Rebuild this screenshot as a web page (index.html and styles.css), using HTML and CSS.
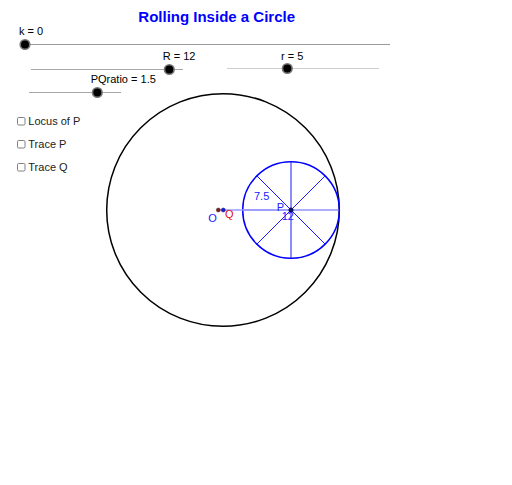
FILE: index.html
```html
<!DOCTYPE html>
<html>
<head>
<meta charset="utf-8">
<link rel="stylesheet" href="styles.css">
</head>
<body>
<div class="applet">
<svg class="board" width="512" height="485" viewBox="0 0 512 485" xmlns="http://www.w3.org/2000/svg">
  <text class="title" x="138.3" y="22.4">Rolling Inside a Circle</text>

  <!-- sliders -->
  <text class="lbl" x="19" y="35">k = 0</text>
  <line class="track dark" x1="25" y1="44.5" x2="390" y2="44.5"/>
  <circle class="knob" cx="25" cy="44.5" r="4.8"/>

  <text class="lbl" x="162.7" y="60">R = 12</text>
  <line class="track mid" x1="31" y1="69.5" x2="183" y2="69.5"/>
  <circle class="knob" cx="169.3" cy="69.5" r="4.8"/>

  <text class="lbl" x="281" y="60">r = 5</text>
  <line class="track light" x1="227" y1="68.5" x2="379" y2="68.5"/>
  <circle class="knob" cx="287.3" cy="68.5" r="4.8"/>

  <text class="lbl" x="90.7" y="83.3">PQratio = 1.5</text>
  <line class="track mid" x1="29" y1="92.5" x2="121" y2="92.5"/>
  <circle class="knob" cx="97.3" cy="92.5" r="4.8"/>

  <!-- checkboxes -->
  <rect class="cb" x="17.5" y="117.5" width="7.5" height="7.5" rx="1.2"/>
  <text class="cblbl" x="28.3" y="124.5">Locus of P</text>
  <rect class="cb" x="17.5" y="140.5" width="7.5" height="7.5" rx="1.2"/>
  <text class="cblbl" x="28.3" y="147.5">Trace P</text>
  <rect class="cb" x="17.5" y="163.5" width="7.5" height="7.5" rx="1.2"/>
  <text class="cblbl" x="28.3" y="170.5">Trace Q</text>

  <!-- geometry -->
  <circle class="big" cx="223" cy="210" r="116.3"/>
  <circle class="small" cx="291" cy="210" r="48.3"/>
  <line class="spoke" x1="291" y1="161.7" x2="291" y2="258.3"/>
  <line class="spoke" x1="256.8" y1="175.8" x2="325.2" y2="244.2"/>
  <line class="spoke" x1="256.8" y1="244.2" x2="325.2" y2="175.8"/>
  <line class="spoke-h" x1="242.7" y1="210" x2="339.3" y2="210"/>
  <line class="seg" x1="218.3" y1="210" x2="291" y2="210"/>

  <circle class="ptQ" cx="218.3" cy="210" r="2"/>
  <circle class="ptO" cx="223.3" cy="210" r="2"/>
  <circle class="ptP" cx="291" cy="210" r="2.5"/>

  <text class="blue lbl" x="208.3" y="222.3">O</text>
  <text class="red lbl" x="225" y="217.5">Q</text>
  <text class="blue lbl" x="276.7" y="211">P</text>
  <text class="blue lbl" x="281.7" y="220">12</text>
  <text class="blue lbl" x="254" y="200">7.5</text>
</svg>
</div>
</body>
</html>
```
FILE: styles.css
```css
html, body {
  margin: 0;
  padding: 0;
  background: #ffffff;
}
.applet {
  width: 512px;
  height: 485px;
  overflow: hidden;
}
.board {
  display: block;
  font-family: "Liberation Sans", Arial, sans-serif;
}
.title {
  font-size: 15px;
  font-weight: bold;
  fill: #0000ff;
}
.lbl {
  font-size: 11px;
  fill: #000000;
}
.cblbl {
  font-size: 11px;
  fill: #222222;
}
.track {
  stroke-width: 1;
}
.track.dark { stroke: #9a9a9a; }
.track.mid { stroke: #a8a8a8; }
.track.light { stroke: #cfcfcf; }
.knob {
  fill: #000000;
  stroke: #777777;
  stroke-width: 1.6;
}
.cb {
  fill: #ffffff;
  stroke: #808080;
  stroke-width: 1;
}
.big {
  fill: none;
  stroke: #000000;
  stroke-width: 1.5;
}
.small {
  fill: none;
  stroke: #0000ff;
  stroke-width: 1.5;
}
.spoke {
  stroke: #1a1aff;
  stroke-width: 1;
}
.spoke-h {
  stroke: #5c5cff;
  stroke-width: 1;
}
.seg {
  stroke: #9a9aff;
  stroke-width: 1.5;
}
.ptQ { fill: #7a1f1f; stroke: #552222; stroke-width: 0.5; }
.ptO { fill: #1f1fcf; stroke: #101080; stroke-width: 0.5; }
.ptP { fill: #101060; }
.blue { fill: #2020ff; }
.red { fill: #dd1111; }
```
